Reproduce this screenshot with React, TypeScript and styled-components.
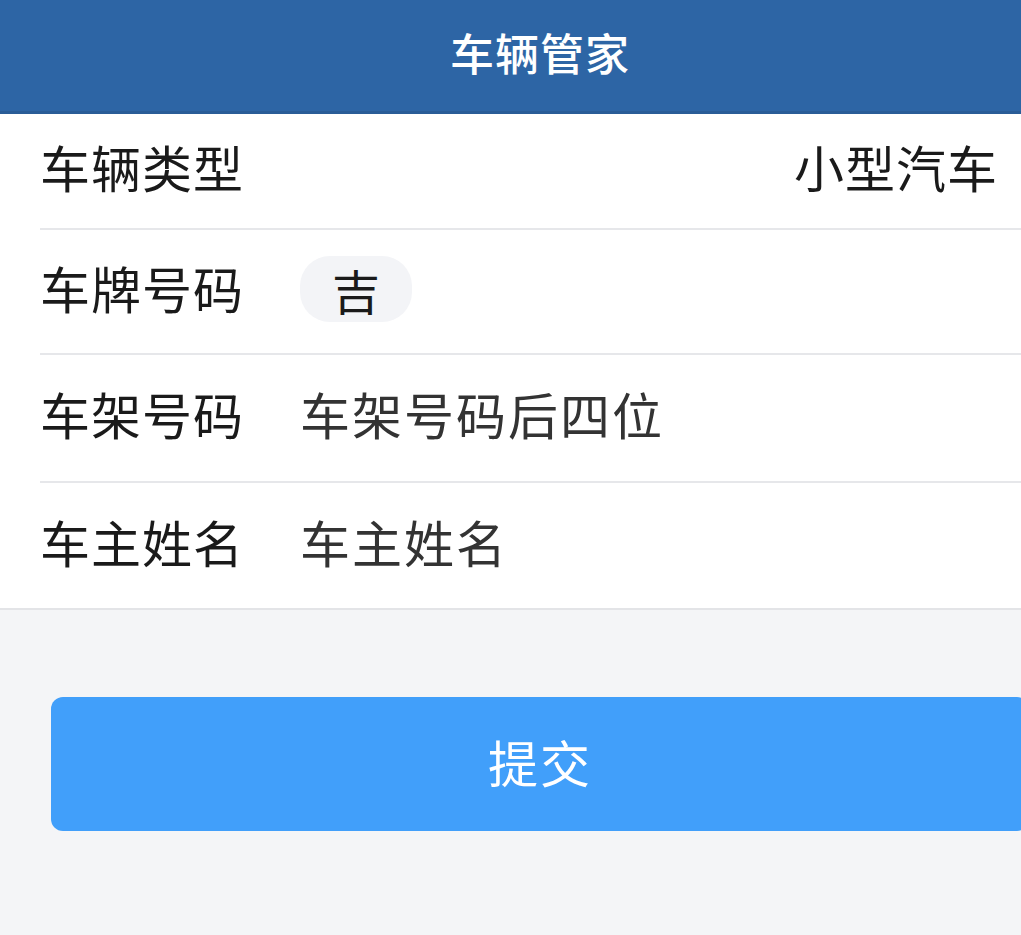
import * as React from 'react';
import styled, { createGlobalStyle } from 'styled-components';

const GlobalStyle = createGlobalStyle`
  html, body {
    margin: 0;
    padding: 0;
    background: #f4f5f7;
    overflow: hidden;
  }
  body {
    font-family: "Noto Sans CJK SC", "Noto Sans", sans-serif;
  }
`;

const Page = styled.div`
  width: 1080px;
  min-height: 935px;
  background: #f4f5f7;
`;

const Header = styled.header`
  height: 114px;
  box-sizing: border-box;
  padding-bottom: 8px;
  background: #2d65a5;
  border-bottom: 3px solid #2a5d97;
  display: flex;
  align-items: center;
  justify-content: center;
  color: #fff;
  font-size: 44px;
  font-weight: 500;
  letter-spacing: 1px;
`;

const Form = styled.div`
  background: #fff;
  padding-left: 40px;
  border-bottom: 2px solid #e3e4e7;
`;

const Row = styled.div<{ $height: number; $last?: boolean }>`
  height: ${(p) => p.$height}px;
  box-sizing: border-box;
  padding: 0 82px 10px 0;
  display: flex;
  align-items: center;
  border-bottom: ${(p) => (p.$last ? 'none' : '2px solid #e6e7ea')};
`;

const Label = styled.div`
  width: 260px;
  flex-shrink: 0;
  font-size: 50px;
  color: #1a1a1a;
  letter-spacing: 1px;
`;

const Value = styled.div<{ $right?: boolean }>`
  flex: 1;
  font-size: 50px;
  color: #333;
  letter-spacing: 2px;
  text-align: ${(p) => (p.$right ? 'right' : 'left')};
`;

const TypeValue = styled(Value)`
  color: #1a1a1a;
  letter-spacing: 1px;
`;

const ProvinceChip = styled.div`
  width: 112px;
  height: 66px;
  border-radius: 30px;
  background: #f3f4f7;
  display: flex;
  align-items: center;
  justify-content: center;
  font-size: 48px;
  color: #1a1a1a;
  margin-top: 4px;
`;

const Actions = styled.div`
  padding: 87px 51px 0;
`;

const SubmitButton = styled.button`
  width: 100%;
  height: 134px;
  border: none;
  border-radius: 12px;
  background: #419ffa;
  color: #fff;
  font-family: inherit;
  font-size: 50px;
  letter-spacing: 2px;
  padding-bottom: 8px;
  display: flex;
  align-items: center;
  justify-content: center;
`;

const App: React.FC = () => {
  return (
    <Page>
      <GlobalStyle />
      <Header>车辆管家</Header>
      <Form>
        <Row $height={116}>
          <Label>车辆类型</Label>
          <TypeValue $right>小型汽车</TypeValue>
        </Row>
        <Row $height={125}>
          <Label>车牌号码</Label>
          <ProvinceChip>吉</ProvinceChip>
        </Row>
        <Row $height={128}>
          <Label>车架号码</Label>
          <Value>车架号码后四位</Value>
        </Row>
        <Row $height={125} $last>
          <Label>车主姓名</Label>
          <Value>车主姓名</Value>
        </Row>
      </Form>
      <Actions>
        <SubmitButton>提交</SubmitButton>
      </Actions>
    </Page>
  );
};

export default App;
